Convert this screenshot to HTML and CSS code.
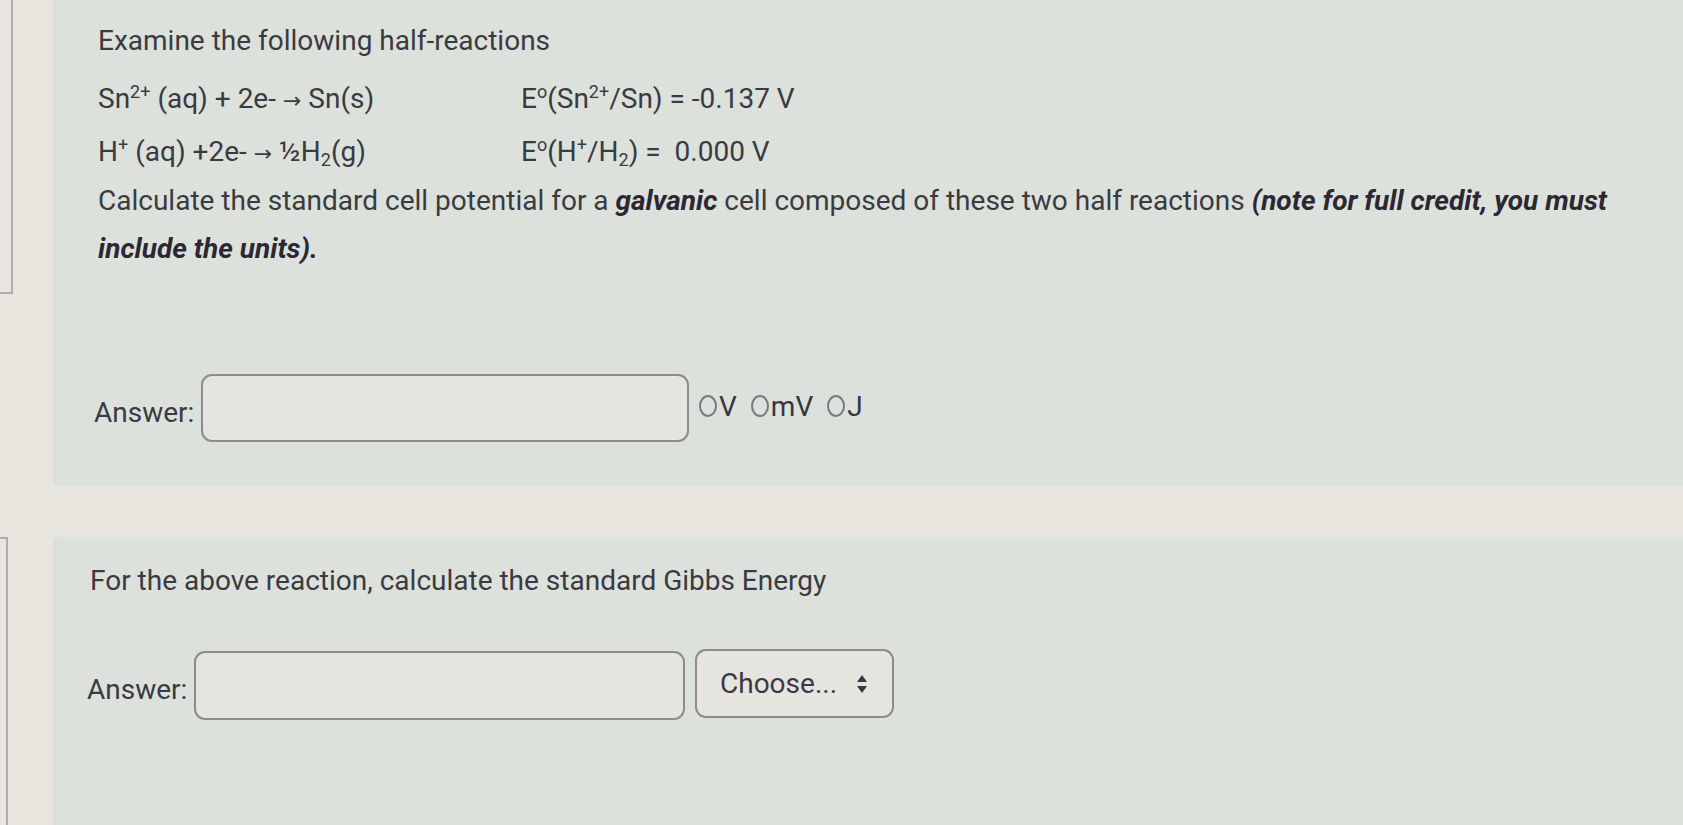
FILE: index.html
```html
<!DOCTYPE html>
<html lang="en">
<head>
<meta charset="utf-8">
<title>Half-reactions question</title>
<link rel="stylesheet" href="styles.css">
</head>
<body>
<div class="page">
  <aside class="rail">
    <div class="rail-top"></div>
    <div class="rail-bottom"></div>
  </aside>
  <main class="questions">
    <section class="card card-first">
      <div class="qtext">
        <p class="intro">Examine the following half-reactions</p>
        <div class="reactions">
          <span>Sn<sup>2+</sup> (aq) + 2e- <span class="arrow">&rarr;</span> Sn(s)</span>
          <span>E<sup>o</sup>(Sn<sup>2+</sup>/Sn) = -0.137 V</span>
          <span>H<sup>+</sup> (aq) +2e- <span class="arrow">&rarr;</span> &frac12;H<sub>2</sub>(g)</span>
          <span>E<sup>o</sup>(H<sup>+</sup>/H<sub>2</sub>) = &nbsp;0.000 V</span>
        </div>
        <p class="task">Calculate the standard cell potential for a <b><i>galvanic</i></b> cell composed of these two half reactions <b><i>(note for full credit, you must include the units).</i></b></p>
      </div>
      <div class="answer answer-first">
        <label class="answer-label">Answer:</label>
        <input class="answer-input" type="text" aria-label="Answer">
        <div class="units">
          <label class="unit"><input type="radio" name="unit"><span>V</span></label>
          <label class="unit"><input type="radio" name="unit"><span>mV</span></label>
          <label class="unit"><input type="radio" name="unit"><span>J</span></label>
        </div>
      </div>
    </section>
    <section class="card card-second">
      <div class="qtext">
        <p class="intro2">For the above reaction, calculate the standard Gibbs Energy</p>
      </div>
      <div class="answer answer-second">
        <label class="answer-label">Answer:</label>
        <input class="answer-input" type="text" aria-label="Answer">
        <div class="select">
          <span>Choose...</span>
          <svg class="select-arrow" width="12" height="22" viewBox="0 0 12 22" aria-hidden="true">
            <path d="M6 2 L11 9 L1 9 Z" fill="#3b3545"/>
            <path d="M6 20 L11 13 L1 13 Z" fill="#3b3545"/>
          </svg>
        </div>
      </div>
    </section>
  </main>
</div>
</body>
</html>
```

FILE: styles.css
```css
html, body {
  margin: 0;
  padding: 0;
}

body {
  background: #e8e5df;
  font-family: Roboto, "Liberation Sans", sans-serif;
  color: #3b3a41;
  width: 1683px;
  height: 825px;
  overflow: hidden;
}

.page {
  display: grid;
  grid-template-columns: 54px 1fr;
  height: 825px;
}

.rail {
  display: flex;
  flex-direction: column;
}

.rail-top {
  width: 11px;
  height: 292px;
  border-right: 2px solid #b0ada8;
  border-bottom: 2px solid #b0ada8;
}

.rail-bottom {
  margin-top: 243px;
  width: 6px;
  flex: 1;
  border-right: 2px solid #b0ada8;
  border-top: 2px solid #b0ada8;
}

.questions {
  display: flex;
  flex-direction: column;
  gap: 51px;
}

.card {
  background: #dce1dc;
  border-left: 1px solid #d3d8d3;
}

.card-first {
  height: 486px;
  box-sizing: border-box;
  padding: 16px 0 0 43px;
  border-bottom-left-radius: 4px;
}

.card-second {
  flex: 1;
  padding: 19px 0 0 35px;
  border-top-left-radius: 4px;
}

.qtext {
  font-size: 28px;
  line-height: 49px;
}

.qtext p {
  margin: 0;
}

.intro {
  margin-bottom: 8px !important;
}

.reactions {
  display: grid;
  grid-template-columns: 423px auto;
  justify-content: start;
  line-height: 51px;
}

.arrow {
  font-family: "DejaVu Sans", sans-serif;
  font-size: 22px;
}

sup, sub {
  font-size: 18px;
  line-height: 0;
}

sup {
  vertical-align: 10px;
}

sub {
  vertical-align: -5px;
}

.qtext .task {
  margin-top: -2px;
  line-height: 48px;
  max-width: 1530px;
}

.task b {
  font-weight: 700;
  color: #2c2733;
}

.answer {
  display: flex;
  align-items: center;
  font-size: 28px;
}

.answer-first {
  margin-top: 101px;
  margin-left: -4px;
}

.answer-second {
  margin-top: 46px;
  margin-left: -3px;
}

.answer-label {
  width: 107px;
  padding-top: 8px;
}

.answer-input {
  box-sizing: border-box;
  width: 488px;
  height: 68px;
  margin: 0;
  border: 2px solid #8d8b90;
  border-radius: 11px;
  background: #e5e4df;
  outline: none;
}

.answer-second .answer-input {
  width: 491px;
  height: 69px;
}

.units {
  display: flex;
  align-items: center;
  gap: 14px;
  margin-left: 10px;
  margin-top: -4px;
  color: #38353f;
}

.unit {
  display: flex;
  align-items: center;
}

.unit input {
  appearance: none;
  -webkit-appearance: none;
  box-sizing: border-box;
  width: 18px;
  height: 22px;
  margin: 0 2px 0 0;
  border: 2px solid #7a7880;
  border-radius: 50%;
  background: transparent;
}

.select {
  box-sizing: border-box;
  width: 199px;
  height: 69px;
  margin-left: 10px;
  margin-top: -4px;
  display: flex;
  align-items: center;
  justify-content: space-between;
  padding: 0 24px 0 23px;
  border: 2px solid #8d8b90;
  border-radius: 11px;
  background: #e6e4df;
  color: #3d3944;
}

.select-arrow {
  display: block;
}
```
